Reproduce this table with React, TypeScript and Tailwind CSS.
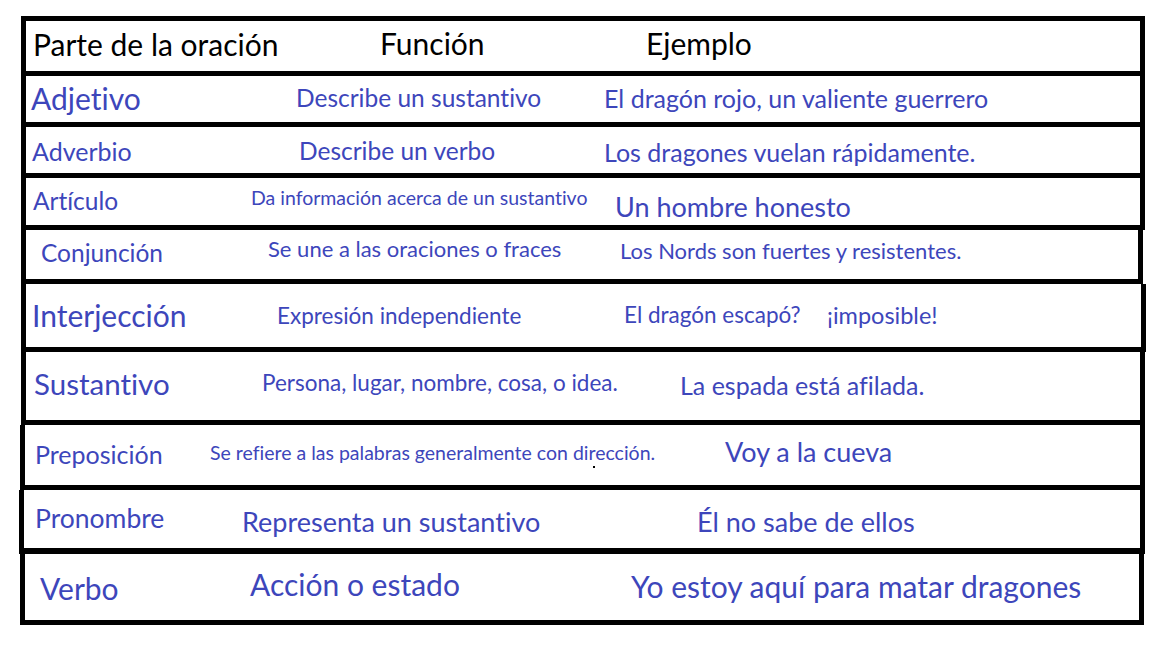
type Cell = { text: string; cls: string };
type Row = { box: string; cells: Cell[]; extra?: Cell };

const blue = "text-[#3d46bb]";

const rows: Row[] = [
  {
    box: "h-[51px]",
    cells: [
      { text: "Adjetivo", cls: "w-[270px] pl-[5px] text-[30px]" },
      { text: "Describe un sustantivo", cls: "w-[308px] text-[24.5px]" },
      { text: "El dragón rojo, un valiente guerrero", cls: "text-[25px]" },
    ],
  },
  {
    box: "h-[51px]",
    cells: [
      { text: "Adverbio", cls: "w-[273px] pl-[6px] text-[25px] translate-y-[2px]" },
      { text: "Describe un verbo", cls: "w-[305px] text-[24.5px] translate-y-[2px]" },
      { text: "Los dragones vuelan rápidamente.", cls: "text-[25px] translate-y-[3px]" },
    ],
  },
  {
    box: "h-[52px]",
    cells: [
      { text: "Artículo", cls: "w-[225px] pl-[7px] text-[24.5px] translate-y-[1px]" },
      { text: "Da información acerca de un sustantivo", cls: "w-[364px] text-[19.5px] -translate-y-[3px]" },
      { text: "Un hombre honesto", cls: "text-[27px] translate-y-[6px]" },
    ],
  },
  {
    box: "h-[54px] mr-[2px]",
    cells: [
      { text: "Conjunción", cls: "w-[242px] pl-[15px] text-[24.5px]" },
      { text: "Se une a las oraciones o fraces", cls: "w-[352px] text-[22px] -translate-y-[5px]" },
      { text: "Los Nords son fuertes y resistentes.", cls: "text-[22px] -translate-y-[3px]" },
    ],
  },
  {
    box: "h-[68px] -mr-[1px]",
    cells: [
      { text: "Interjección", cls: "w-[251px] pl-[6px] text-[30px]" },
      { text: "Expresión independiente", cls: "w-[347px] text-[22.5px] translate-y-[2px]" },
      { text: "El dragón escapó?", cls: "w-[203px] text-[22.5px] translate-y-[1px]" },
    ],
    extra: { text: "¡imposible!", cls: "text-[23.5px] translate-y-[1px]" },
  },
  {
    box: "h-[73px]",
    cells: [
      { text: "Sustantivo", cls: "w-[236px] pl-[8px] text-[29.5px] -translate-y-[1px]" },
      { text: "Persona, lugar, nombre, cosa, o idea.", cls: "w-[418px] text-[22.5px] -translate-y-[2px]" },
      { text: "La espada está afilada.", cls: "text-[25px]" },
    ],
  },
  {
    box: "h-[65px] -ml-[1px]",
    cells: [
      { text: "Preposición", cls: "w-[185px] pl-[10px] text-[25px]" },
      { text: "Se refiere a las palabras generalmente con dirección.", cls: "w-[515px] text-[19.5px] -translate-y-[1px]" },
      { text: "Voy a la cueva", cls: "text-[27px] -translate-y-[3px]" },
    ],
  },
  {
    box: "h-[64px] -ml-[2px] border-b-[6px]",
    cells: [
      { text: "Pronombre", cls: "w-[218px] pl-[11px] text-[26.5px]" },
      { text: "Representa un sustantivo", cls: "w-[455px] text-[27px] translate-y-[3px]" },
      { text: "Él no sabe de ellos", cls: "text-[27px] translate-y-[3px]" },
    ],
  },
  {
    box: "h-[71px] -ml-[1px] mr-[1px]",
    cells: [
      { text: "Verbo", cls: "w-[225px] pl-[15px] text-[30px] translate-y-[2px]" },
      { text: "Acción o estado", cls: "w-[381px] text-[30px] -translate-y-[2px]" },
      { text: "Yo estoy aquí para matar dragones", cls: "text-[30px]" },
    ],
  },
];

export default function App() {
  return (
    <div className="w-[1164px] h-[645px] bg-white font-['Lato',sans-serif] [font-variant-ligatures:none] overflow-hidden">
      <div className="ml-[21px] mt-[16px] w-[1124px] flex flex-col">
        {/* header */}
        <div className="h-[60px] pb-[4px] border-[5px] border-black flex items-center text-black text-[30px] leading-none whitespace-nowrap">
          <div className="w-[354px] pl-[7px] shrink-0">Parte de la oración</div>
          <div className="w-[266px] shrink-0 -translate-y-[1px]">Función</div>
          <div className="-translate-y-[1px]">Ejemplo</div>
        </div>
        {rows.map((r) => (
          <div
            key={r.cells[0].text}
            className={`relative pb-[2px] border-x-[5px] border-b-[5px] border-black flex items-center leading-none whitespace-nowrap ${blue} ${r.box}`}
          >
            {r.cells.map((c) => (
              <div key={c.text} className={`shrink-0 ${c.cls}`}>
                {c.text}
              </div>
            ))}
            {r.extra && <div className={`shrink-0 ${r.extra.cls}`}>{r.extra.text}</div>}
            {r.cells[0].text === "Preposición" && (
              <span className="absolute left-[568px] top-[41px] w-[2px] h-[2px] bg-black" />
            )}
          </div>
        ))}
      </div>
    </div>
  );
}
